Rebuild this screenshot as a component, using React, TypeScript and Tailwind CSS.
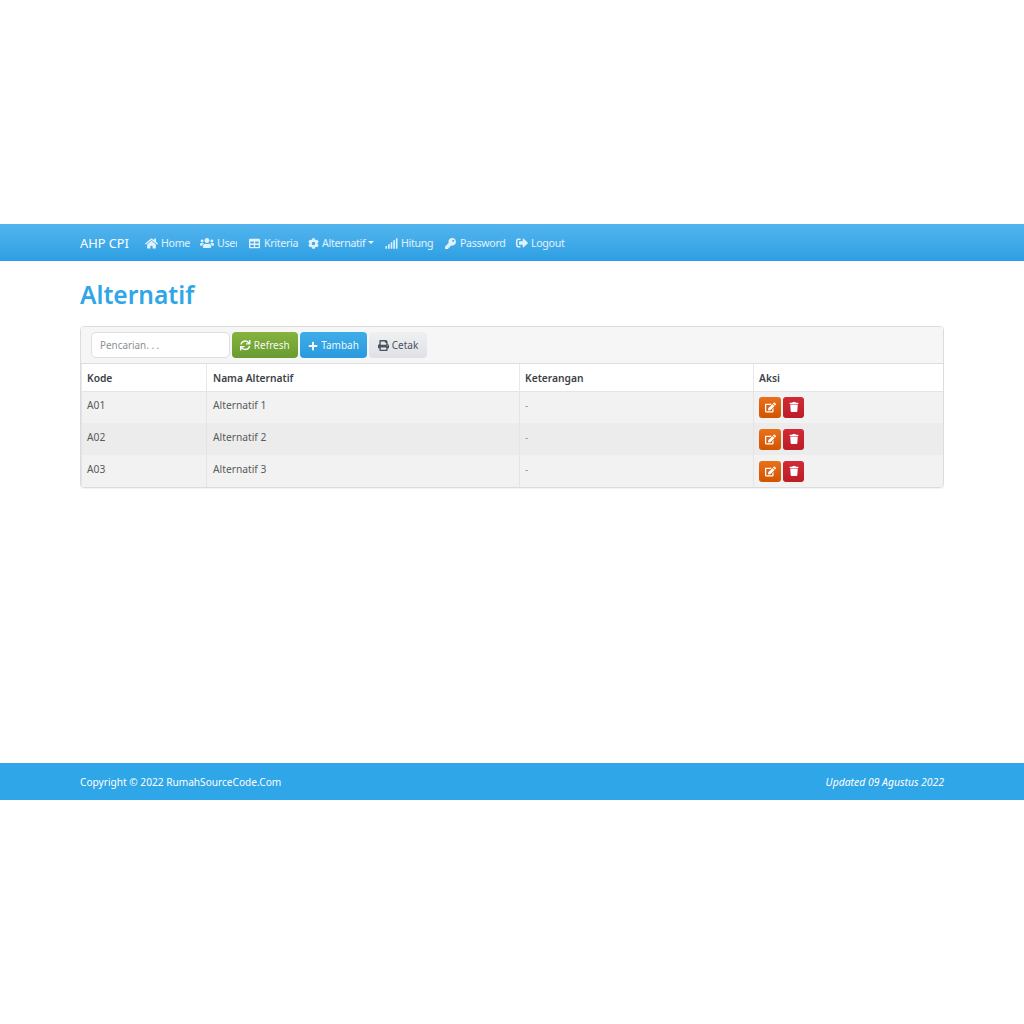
import { FaHome, FaUsers, FaTable, FaCog, FaSignal, FaKey, FaSignOutAlt, FaSync, FaPlus, FaPrint, FaEdit, FaTrash } from "react-icons/fa";

function NavItem({ icon, label, caret, className = "" }: { icon: React.ReactNode; label: string; caret?: boolean; className?: string }) {
  return (
    <a className={`flex items-center gap-[3px] text-[10.6px] tracking-[-0.3px] text-white/85 whitespace-nowrap ${className}`}>
      {icon}
      <span>{label}</span>
      {caret && <span className="mb-[1px] w-0 h-0 border-x-[3.5px] border-x-transparent border-t-[3.5px] border-t-white/85" />}
    </a>
  );
}

const rows = ["1", "2", "3"];

export default function App() {
  return (
    <div className="pt-[224px] h-[1024px] bg-white flex flex-col font-['Noto_Sans','Open_Sans',sans-serif] text-[#444]">
      <nav className="h-[37px] shrink-0 bg-gradient-to-b from-[#52b5ee] to-[#2c9fe3] pl-[80px] pt-[2px] flex items-center">
        <span className="text-[12.8px] text-white w-[65px]">AHP CPI</span>
        <NavItem icon={<FaHome className="text-[13px]" />} label="Home" className="w-[55px]" />
        <a className="flex items-center gap-[3px] text-[10.6px] tracking-[-0.3px] text-white/85 w-[37px] overflow-hidden mr-[12px]">
          <FaUsers className="text-[14px] shrink-0" />
          <span>User</span>
        </a>
        <NavItem icon={<FaTable className="text-[11px]" />} label="Kriteria" className="w-[59px] gap-[4px]" />
        <NavItem icon={<FaCog className="text-[11px]" />} label="Alternatif" caret className="w-[77px]" />
        <NavItem icon={<FaSignal className="text-[13px]" />} label="Hitung" className="w-[60px]" />
        <NavItem icon={<FaKey className="text-[11px]" />} label="Password" className="w-[71px] gap-[4px]" />
        <NavItem icon={<FaSignOutAlt className="text-[12px]" />} label="Logout" />
      </nav>

      <main className="flex-1 px-[80px]">
        <h1 className="h-[65px] pt-[16px] text-[24.5px] leading-[36px] font-semibold text-[#2fa6e8]">Alternatif</h1>
        <div className="border border-[#dcdcdc] rounded-[4px] overflow-hidden shadow-[0_1px_1px_rgba(0,0,0,0.05)]">
          <div className="h-[37px] bg-[#f6f6f6] border-b border-[#dddddd] pl-[10px] flex items-center gap-[2px]">
            <input
              placeholder="Pencarian. . ."
              className="w-[139px] h-[26px] bg-white border border-[#dedede] rounded-[5px] px-[8px] text-[9.9px] outline-none placeholder:text-[#8a8f96]"
            />
            <button className="h-[26px] w-[66px] rounded-[4px] bg-gradient-to-b from-[#86b33f] to-[#689b31] text-white/95 text-[10px] pt-[1px] flex items-center justify-center gap-[3px]">
              <FaSync className="text-[10.5px]" /> Refresh
            </button>
            <button className="h-[26px] w-[67px] rounded-[4px] bg-gradient-to-b from-[#3dade9] to-[#2a9ade] text-white/95 text-[10px] pt-[1px] flex items-center justify-center gap-[3px]">
              <FaPlus className="text-[10px]" /> Tambah
            </button>
            <button className="h-[26px] w-[58px] rounded-[4px] bg-gradient-to-b from-[#eff0f2] to-[#dfe1e5] text-[#4a5360] text-[10px] pt-[1px] flex items-center justify-center gap-[3px]">
              <FaPrint className="text-[11px]" /> Cetak
            </button>
          </div>
          <table className="w-full table-fixed border-collapse text-[10.25px]">
            <colgroup>
              <col className="w-[125px]" />
              <col className="w-[313px]" />
              <col className="w-[234px]" />
              <col />
            </colgroup>
            <thead>
              <tr className="h-[27px] bg-white text-[#3d4248] border-b border-[#e4e4e4]">
                <th className="text-left font-semibold pl-[5px] pt-[2px] border-l border-r border-[#e8e8e8]">Kode</th>
                <th className="text-left font-semibold pl-[6px] pt-[2px] border-r border-[#e8e8e8]">Nama Alternatif</th>
                <th className="text-left font-semibold pl-[5px] pt-[2px] border-r border-[#e8e8e8]">Keterangan</th>
                <th className="text-left font-semibold pl-[5px] pt-[2px]">Aksi</th>
              </tr>
            </thead>
            <tbody>
              {rows.map((n, i) => (
                <tr key={n} className={`h-[32px] ${i === 1 ? "bg-[#ececec]" : "bg-[#f2f2f2]"} text-[#5a5a5a]`}>
                  <td className="pl-[5px] pb-[3px] border-l border-r border-[#e4e4e4]">A0{n}</td>
                  <td className="pl-[6px] pb-[3px] border-r border-[#e4e4e4]">Alternatif {n}</td>
                  <td className="pl-[5px] pb-[3px] border-r border-[#e4e4e4] text-[#999]">-</td>
                  <td className="pl-[5px]">
                    <div className="flex gap-[2px]">
                      <span className="w-[22px] h-[21px] rounded-[3px] bg-gradient-to-b from-[#e8711a] to-[#d35400] text-white flex items-center justify-center">
                        <FaEdit className="text-[11px]" />
                      </span>
                      <span className="w-[21px] h-[21px] rounded-[3px] bg-gradient-to-b from-[#d12b36] to-[#bb1c26] text-white flex items-center justify-center">
                        <FaTrash className="text-[10px]" />
                      </span>
                    </div>
                  </td>
                </tr>
              ))}
            </tbody>
          </table>
        </div>
      </main>

      <footer className="h-[37px] shrink-0 mb-[224px] bg-[#2fa6e8] px-[80px] pt-[2px] flex items-center justify-between text-white">
        <span className="text-[10.15px]">Copyright © 2022 RumahSourceCode.Com</span>
        <em className="text-[10.4px]">Updated 09 Agustus 2022</em>
      </footer>
    </div>
  );
}
